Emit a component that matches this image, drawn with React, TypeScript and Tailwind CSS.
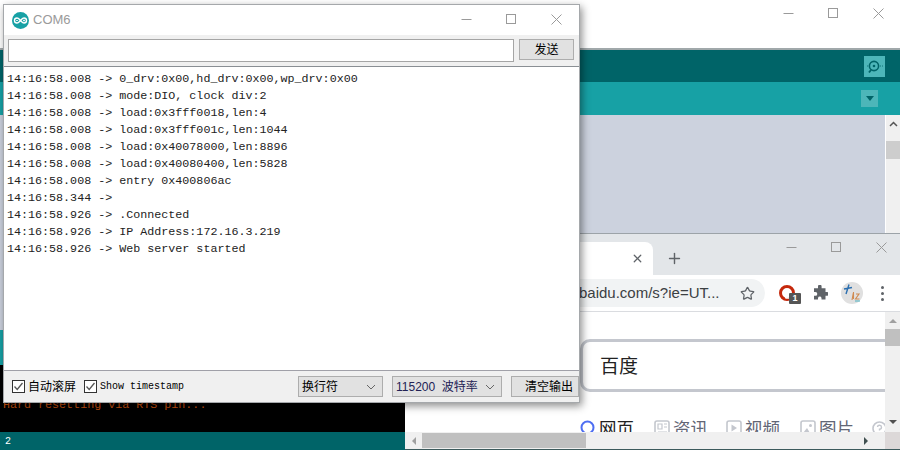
import React from 'react';
import { Plus, Star, X } from 'lucide-react';

const lines = [
	'14:16:58.008 -> 0_drv:0x00,hd_drv:0x00,wp_drv:0x00',
	'14:16:58.008 -> mode:DIO, clock div:2',
	'14:16:58.008 -> load:0x3fff0018,len:4',
	'14:16:58.008 -> load:0x3fff001c,len:1044',
	'14:16:58.008 -> load:0x40078000,len:8896',
	'14:16:58.008 -> load:0x40080400,len:5828',
	'14:16:58.008 -> entry 0x400806ac',
	'14:16:58.344 -> ',
	'14:16:58.926 -> .Connected',
	'14:16:58.926 -> IP Address:172.16.3.219',
	'14:16:58.926 -> Web server started',
];

const cjk = "font-['Liberation_Sans','Noto_Sans_CJK_SC',sans-serif]";

function WinButtons({ className }: { className: string }) {
	return (
		<div className={`flex items-center text-[#9a9a9a] ${className}`}>
			<svg width="11" height="11" viewBox="0 0 11 11" className="mr-[34px]">
				<path d="M0.5 5.5H10.5" stroke="currentColor" />
			</svg>
			<svg width="11" height="11" viewBox="0 0 11 11" className="mr-[34px]">
				<rect x="0.5" y="0.5" width="9" height="9" fill="none" stroke="currentColor" />
			</svg>
			<svg width="11" height="11" viewBox="0 0 11 11">
				<path d="M0.5 0.5L10.5 10.5M10.5 0.5L0.5 10.5" stroke="currentColor" />
			</svg>
		</div>
	);
}

function CheckBox() {
	return (
		<span className="flex h-[13px] w-[13px] shrink-0 items-center justify-center border border-[#333333] bg-white">
			<svg width="11" height="11" viewBox="0 0 11 11">
				<path d="M1.5 5.5L4.2 8.5L9.5 2" fill="none" stroke="#555555" strokeWidth="1.3" />
			</svg>
		</span>
	);
}

function Chevron() {
	return (
		<svg width="10" height="6" viewBox="0 0 10 6">
			<path d="M1 1L5 5L9 1" fill="none" stroke="#666666" />
		</svg>
	);
}

function ArduinoIDE() {
	return (
		<div className="absolute inset-0 flex flex-col bg-white">
			<div className="relative h-[50px] shrink-0 border-b-2 border-[#a0a8aa] bg-white">
				<WinButtons className="absolute top-[8px] right-[16px]" />
			</div>
			<div className="flex h-[32px] shrink-0 items-center justify-end bg-[#006468] pr-[15px]">
				<div className="flex h-[21px] w-[21px] items-center justify-center bg-[#4db6b9]">
					<svg width="17" height="17" viewBox="0 0 17 17">
						<circle cx="8" cy="8" r="4.6" fill="none" stroke="#006468" strokeWidth="1.6" />
						<circle cx="8" cy="8" r="1.3" fill="#006468" />
						<path d="M5 12L3 14.5" stroke="#006468" strokeWidth="2" />
						<path d="M14 8h1M16 8h1M1 8h1" stroke="#006468" strokeWidth="0.8" />
					</svg>
				</div>
			</div>
			<div className="flex h-[33px] shrink-0 items-center justify-end bg-[#17a1a5] pr-[22px]">
				<div className="flex h-[17px] w-[17px] items-center justify-center bg-[#4db6b9]">
					<div className="h-0 w-0 border-x-[4.5px] border-t-[5px] border-x-transparent border-t-[#006468]" />
				</div>
			</div>
			<div className="flex h-[215px] shrink-0 justify-end bg-[#ccd2de]">
				<div className="flex w-[15px] flex-col border-l border-white bg-[#f0f0f0]">
					<div className="flex h-[26px] justify-center pt-[6px]">
						<svg width="9" height="6" viewBox="0 0 9 6">
							<path d="M1 5L4.5 1.5L8 5" fill="none" stroke="#555555" strokeWidth="1.5" />
						</svg>
					</div>
					<div className="h-[18px] bg-[#cdcdcd]" />
				</div>
			</div>
			<div className="h-[35px] shrink-0 bg-[#17a1a5]" />
			<div className="flex h-[67px] shrink-0 flex-col justify-end bg-black pb-[21px] pl-[3px] font-['Liberation_Mono',monospace] text-[11.7px] leading-[12px] whitespace-nowrap text-[#c8500f]">
				Hard resetting via RTS pin...
			</div>
			<div className="flex grow items-center bg-[#006468] px-[5px] font-['Liberation_Mono',monospace] text-[10px] text-white">
				2
			</div>
		</div>
	);
}

function Chrome() {
	return (
		<div className="absolute top-[233px] left-[405px] flex h-[217px] w-[495px] flex-col border-t border-[#9ca3a8] bg-white">
			<div className="relative flex h-[41px] shrink-0 bg-[#e3e6e9]">
				<div className="mt-[8px] flex h-[33px] w-[248px] items-center justify-end rounded-t-[8px] bg-white pr-[9px]">
					<X size={13} strokeWidth={2.4} color="#5f6368" />
				</div>
				<div className="ml-[13px] flex items-center pt-[7px]">
					<Plus size={17} strokeWidth={2} color="#5f6368" />
				</div>
				<WinButtons className="absolute top-[8px] right-[13px]" />
			</div>
			<div className="flex h-[37px] shrink-0 items-center border-b border-[#dadce0] pl-[100px]">
				<div className="flex h-[28px] w-[260px] items-center rounded-r-[14px] bg-[#f1f3f4] pr-[10px] pl-[74px] font-['Liberation_Sans',sans-serif] text-[15px] whitespace-nowrap text-[#3c4043]">
					<span>baidu.com/s?ie=UT...</span>
					<Star size={15} strokeWidth={2} color="#5f6368" className="ml-auto shrink-0" />
				</div>
				<div className="relative ml-[14px] h-[16px] w-[16px]">
					<svg width="16" height="16" viewBox="0 0 16 16">
						<circle cx="8" cy="8" r="6.5" fill="#ffffff" stroke="#c5280c" strokeWidth="3" />
						<path d="M5.5 10V5.5M7.5 10V4M9.5 10V4.5M11 10V6M5.5 10L7 13H11V10" fill="none" stroke="#ffffff" strokeWidth="1.4" />
					</svg>
					<div className="absolute top-[8px] left-[10px] flex h-[11px] w-[12px] items-center justify-center rounded-[1px] bg-[#555555] font-['Liberation_Sans',sans-serif] text-[9px] font-bold text-white">
						1
					</div>
				</div>
				<svg width="16" height="16" viewBox="0 0 16 16" className="ml-[17px]">
					<path
						d="M6 1.5A1.8 1.8 0 0 1 9.6 1.5V3.2H13.5V7H15A1.9 1.9 0 0 1 15 10.8H13.5V14.5H9.5V13A1.8 1.8 0 0 0 6 13V14.5H2V10.8H3.4A1.9 1.9 0 0 0 3.4 7H2V3.2H6Z"
						fill="#5f6368"
					/>
				</svg>
				<div className="ml-[13px] flex h-[22px] w-[22px] items-center justify-center rounded-full bg-[#e0e0e0]">
					<svg width="20" height="20" viewBox="0 0 20 20">
						<path d="M2 6L10 4.5M7 1.5L4 11" fill="none" stroke="#2a6fb0" strokeWidth="1.4" />
						<path d="M10 17L11.5 9V16M14 11H17L13.5 16H17.5" fill="none" stroke="#d08a50" strokeWidth="1.1" />
						<path d="M13 18H18" stroke="#4ab0c0" strokeWidth="1" />
					</svg>
				</div>
				<div className="ml-[18px] flex flex-col gap-[3px]">
					<div className="h-[3px] w-[3px] rounded-full bg-[#5f6368]" />
					<div className="h-[3px] w-[3px] rounded-full bg-[#5f6368]" />
					<div className="h-[3px] w-[3px] rounded-full bg-[#5f6368]" />
				</div>
			</div>
			<div className="flex min-h-0 grow">
				<div className="relative min-w-0 grow overflow-hidden bg-white">
					<div className="absolute top-[27px] left-[175px] flex h-[53px] w-[400px] items-center rounded-[10px] border-[3px] border-[#c4c7ce] pl-[17px] font-['Noto_Sans_CJK_SC',sans-serif] text-[19px] text-[#222222]">
						百度
					</div>
					<div className="absolute top-[103px] left-[175px] flex h-[26px] items-center font-['Noto_Sans_CJK_SC',sans-serif] text-[17.5px] leading-[26px] whitespace-nowrap text-[#626675]">
						<svg width="15" height="16" viewBox="0 0 15 16" className="mr-[4px]">
							<circle cx="7.5" cy="7.5" r="6" fill="none" stroke="#4e6ef2" strokeWidth="2" />
							<path d="M11 12L13 15" stroke="#4e6ef2" strokeWidth="2" />
						</svg>
						<span className="mr-[20px] text-[#222222]">网页</span>
						<svg width="16" height="16" viewBox="0 0 16 16" className="mr-[3px]">
							<rect x="1" y="1" width="14" height="14" rx="2" fill="none" stroke="#c4c7ce" strokeWidth="1.6" />
							<path d="M4 4H8V9H4ZM10 4H13M10 7H13M4 12H13" fill="none" stroke="#c4c7ce" strokeWidth="1.2" />
						</svg>
						<span className="mr-[18px]">资讯</span>
						<svg width="16" height="16" viewBox="0 0 16 16" className="mr-[3px]">
							<rect x="1" y="1" width="14" height="14" rx="2" fill="none" stroke="#c4c7ce" strokeWidth="1.6" />
							<path d="M5.5 4.5L11 8L5.5 11.5Z" fill="#c4c7ce" />
						</svg>
						<span className="mr-[20px]">视频</span>
						<svg width="16" height="16" viewBox="0 0 16 16" className="mr-[3px]">
							<rect x="1" y="1" width="14" height="14" rx="2" fill="none" stroke="#c4c7ce" strokeWidth="1.6" />
							<circle cx="10.5" cy="5.5" r="1.5" fill="#c4c7ce" />
							<path d="M3 13L7 8L10 13Z" fill="#c4c7ce" />
						</svg>
						<span className="mr-[18px]">图片</span>
						<svg width="15" height="15" viewBox="0 0 15 15">
							<circle cx="7.5" cy="7.5" r="6.5" fill="none" stroke="#c4c7ce" strokeWidth="1.6" />
							<path d="M5.5 6A2 2 0 1 1 7.5 8.2V9.5M7.5 11V12" fill="none" stroke="#c4c7ce" strokeWidth="1.4" />
						</svg>
					</div>
				</div>
				<div className="flex w-[15px] shrink-0 flex-col bg-[#f0f0f0]">
					<div className="flex h-[17px] items-center justify-center">
						<div className="h-0 w-0 border-x-[4px] border-b-[4px] border-x-transparent border-b-[#a0a0a0]" />
					</div>
					<div className="h-[17px] bg-[#c0c0c0]" />
					<div className="mt-auto flex h-[20px] items-center justify-center">
						<div className="h-0 w-0 border-x-[4px] border-t-[4px] border-x-transparent border-t-[#505050]" />
					</div>
				</div>
			</div>
			<div className="flex h-[18px] shrink-0 items-center border-b border-[#3c5a5c] bg-[#f0f0f0]">
				<div className="flex w-[17px] justify-center">
					<div className="h-0 w-0 border-y-[4px] border-r-[4px] border-y-transparent border-r-[#a0a0a0]" />
				</div>
				<div className="h-[15px] w-[164px] bg-[#c0c0c0]" />
				<div className="mr-[12px] ml-auto flex w-[15px] justify-center">
					<div className="h-0 w-0 border-y-[4px] border-l-[4px] border-y-transparent border-l-[#405050]" />
				</div>
				<div className="h-full w-[15px] bg-[#dcd8d8]" />
			</div>
		</div>
	);
}

function SerialMonitor() {
	return (
		<div className="absolute top-[4px] left-[3px] flex h-[399px] w-[577px] flex-col border border-[#a5a8ab] bg-[#f0f0f0] shadow-[2px_3px_8px_rgba(0,0,0,0.45)]">
			<div className="relative flex h-[30px] shrink-0 items-center bg-white pl-[8px]">
				<svg width="17" height="17" viewBox="0 0 17 17">
					<circle cx="8.5" cy="8.5" r="8.5" fill="#17a1a5" />
					<path
						d="M5 6C7 6 7.5 8 8.5 8.5C9.5 8 10 6 12 6C13.5 6 14.5 7 14.5 8.5C14.5 10 13.5 11 12 11C10 11 9.5 9 8.5 8.5C7.5 9 7 11 5 11C3.5 11 2.5 10 2.5 8.5C2.5 7 3.5 6 5 6Z"
						fill="none"
						stroke="white"
						strokeWidth="1.4"
					/>
					<path d="M4 8.5H6M11 8.5H13M12 7.5V9.5" stroke="white" strokeWidth="0.8" />
				</svg>
				<span className="ml-[4px] font-['Liberation_Sans',sans-serif] text-[13px] text-[#9a9a9a]">COM6</span>
				<WinButtons className="absolute top-[9px] right-[17px]" />
			</div>
			<div className="flex h-[31px] shrink-0 gap-[5px] px-[4px] pt-[4px]">
				<div className="h-[23px] w-[506px] border border-[#a5a5a5] bg-white" />
				<div className={`flex h-[21px] w-[55px] items-center justify-center border border-[#adadad] bg-[#e1e1e1] text-[12px] text-black ${cjk}`}>
					发送
				</div>
			</div>
			<div className="grow border-t border-[#8a8f94] bg-white pt-[4px] pl-[3px] font-['Liberation_Mono',monospace] text-[11.7px] leading-[17px] whitespace-pre text-[#222222]">
				{lines.map((line) => (
					<div key={line}>{line}</div>
				))}
			</div>
			<div className={`flex h-[32px] shrink-0 items-center border-t border-[#a0a0a8] pl-[8px] text-[12px] whitespace-nowrap text-black ${cjk}`}>
				<CheckBox />
				<span className="ml-[3px]">自动滚屏</span>
				<span className="ml-[8px]">
					<CheckBox />
				</span>
				<span className="ml-[3px] w-[85px] font-['Liberation_Mono',monospace] text-[10px]">Show timestamp</span>
				<div className="ml-[113px] flex h-[21px] w-[85px] items-center justify-between border border-[#adadad] bg-[#e1e1e1] pr-[6px] pl-[3px]">
					<span>换行符</span>
					<Chevron />
				</div>
				<div className="ml-[9px] flex h-[21px] w-[110px] items-center justify-between border border-[#adadad] bg-[#e1e1e1] pr-[6px] pl-[3px]">
					<span className="whitespace-pre text-[#222255]">115200  波特率</span>
					<Chevron />
				</div>
				<div className="ml-[9px] flex h-[21px] w-[68px] items-center justify-end border border-[#adadad] bg-[#e1e1e1] pr-[5px]">
					清空输出
				</div>
			</div>
		</div>
	);
}

export default function App() {
	return (
		<div className="relative h-[450px] w-[900px] overflow-hidden bg-white">
			<ArduinoIDE />
			<Chrome />
			<SerialMonitor />
		</div>
	);
}
